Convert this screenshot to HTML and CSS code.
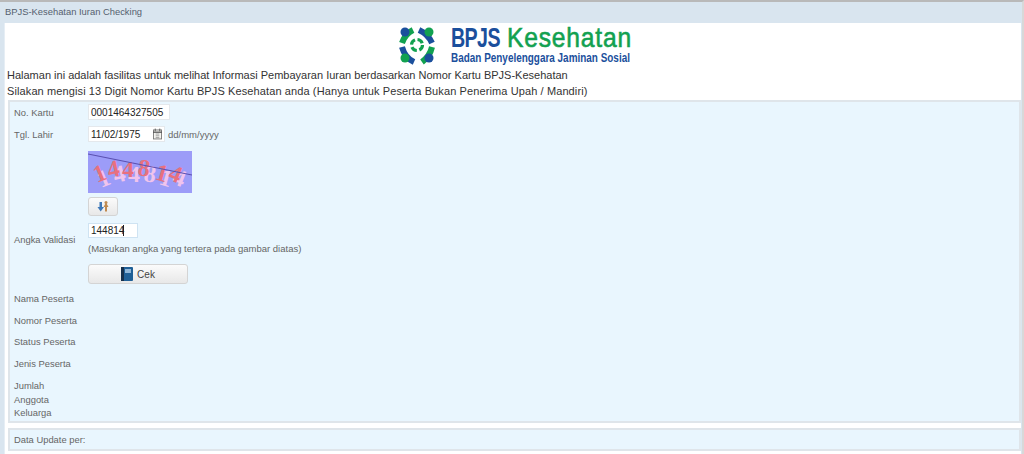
FILE: index.html
```html
<!DOCTYPE html>
<html lang="en">
<head>
    <meta charset="UTF-8">
    <title>BPJS-Kesehatan Iuran Checking</title>
    <link rel="stylesheet" href="styles.css">
</head>
<body>
    <div class="window">
        <div class="title-bar">BPJS-Kesehatan Iuran Checking</div>
        <div class="content">
            <div class="logo">
                <svg width="36" height="40" viewBox="0 0 36 40">
                    <g fill="none" stroke-width="6">
                        <path d="M20 5 Q29 9 33 18" stroke="#1b4f9c"/>
                        <path d="M33 22 Q31 31 23 37" stroke="#12a150"/>
                        <path d="M15 37 Q6 33 3 22" stroke="#1b4f9c"/>
                        <path d="M3 18 Q6 9 14 5" stroke="#12a150"/>
                    </g>
                    <circle cx="6" cy="7" r="4.500" fill="#1b4f9c"/>
                    <circle cx="30" cy="7" r="4.500" fill="#12a150"/>
                    <circle cx="6" cy="33" r="4.500" fill="#12a150"/>
                    <circle cx="30" cy="33" r="4.500" fill="#1b4f9c"/>
                    <path d="M18 9 L30 20 L18 32 L6 20 Z" fill="#fff"/>
                    <circle cx="18" cy="20" r="5.500" fill="none" stroke="#12a150" stroke-width="3.200" stroke-dasharray="6 2.600"/>
                </svg>
                <div class="logo-text">
                    <div class="logo-name"><span class="logo-bpjs">BPJS</span><span class="logo-kes">Kesehatan</span></div>
                    <div class="logo-sub"><span>Badan Penyelenggara Jaminan Sosial</span></div>
                </div>
            </div>
            <p class="intro">Halaman ini adalah fasilitas untuk melihat Informasi Pembayaran Iuran berdasarkan Nomor Kartu BPJS-Kesehatan</p>
            <p class="intro intro-wide">Silakan mengisi 13 Digit Nomor Kartu BPJS Kesehatan anda (Hanya untuk Peserta Bukan Penerima Upah / Mandiri)</p>

            <form class="panel form-grid">
                <label class="row-card">No. Kartu</label>
                <div class="row-card"><input type="text" class="input-card" value="0001464327505"></div>

                <label class="row-date">Tgl. Lahir</label>
                <div class="row-date date-line">
                    <span class="date-box">
                        <input type="text" value="11/02/1975">
                        <svg width="10" height="12" viewBox="0 0 10 12">
                            <rect x="0.5" y="1.5" width="9" height="10" fill="#f4f4f0" stroke="#777"/>
                            <path d="M0 4h10" stroke="#555" stroke-width="1.4"/>
                            <path d="M2.5 0v3M7.5 0v3" stroke="#555"/>
                            <path d="M3 6h4M3 8h4M3 10h4" stroke="#999"/>
                        </svg>
                    </span>
                    <span class="hint">dd/mm/yyyy</span>
                </div>

                <div class="captcha-cell">
                    <svg class="captcha" width="104" height="42" viewBox="0 0 104 42">
                        <rect width="104" height="42" fill="#9c9cf8"/>
                        <g class="captcha-back">
                            <text x="13" y="37" transform="rotate(-22 13 37)">1</text>
                            <text x="27" y="32" transform="rotate(-12 27 32)">4</text>
                            <text x="40" y="31">4</text>
                            <text x="55" y="30" transform="rotate(8 55 30)">8</text>
                            <text x="70" y="33" transform="rotate(16 70 33)">1</text>
                            <text x="83" y="32" transform="rotate(22 83 32)">4</text>
                        </g>
                        <g class="captcha-front">
                            <text x="9" y="32" transform="rotate(-22 9 32)">1</text>
                            <text x="21" y="27" transform="rotate(-12 21 27)">4</text>
                            <text x="34" y="26">4</text>
                            <text x="49" y="24" transform="rotate(8 49 24)">8</text>
                            <text x="66" y="28" transform="rotate(16 66 28)">1</text>
                            <text x="79" y="28" transform="rotate(22 79 28)">4</text>
                        </g>
                        <path d="M0 3 L104 24" stroke="#5a50b0" stroke-width="1.2"/>
                    </svg>
                    <button type="button" class="btn btn-refresh">
                        <svg width="12" height="11" viewBox="0 0 12 11">
                            <path d="M2.500 1h2.500v5h2L3.700 10.500 0.500 6h2z" fill="#3f78b8"/>
                            <path d="M8 10.500V6H6.500L9 1.500 11.500 6H10v4.500z" fill="#c08a50"/>
                            <circle cx="9" cy="1.500" r="1.500" fill="#c08a50"/>
                        </svg>
                    </button>
                </div>

                <label class="row-valid">Angka Validasi</label>
                <div class="row-valid">
                    <div class="valid-box">
                        <input type="text" class="input-valid" value="144814">
                        <span class="caret"></span>
                    </div>
                    <div class="hint hint-valid">(Masukan angka yang tertera pada gambar diatas)</div>
                </div>

                <div class="submit-cell">
                    <button type="button" class="btn btn-cek">
                        <svg width="12" height="14" viewBox="0 0 12 14">
                            <rect width="12" height="14" rx="1" fill="#1f5f96"/>
                            <rect x="0" y="0" width="3" height="14" fill="#16304c"/>
                            <rect x="4" y="2" width="6" height="4" fill="#8fb6d8"/>
                        </svg>
                        Cek
                    </button>
                </div>

                <label class="row-result row-first">Nama Peserta</label><div></div>
                <label class="row-result">Nomor Peserta</label><div></div>
                <label class="row-result">Status Peserta</label><div></div>
                <label class="row-result">Jenis Peserta</label><div></div>
                <label class="row-family">Jumlah Anggota Keluarga</label><div></div>
            </form>

            <div class="panel update-panel">Data Update per:</div>
        </div>
    </div>
</body>
</html>
```

FILE: styles.css
```css
* {
    box-sizing: border-box;
}

html, body {
    height: 100%;
}

body {
    margin: 0;
    overflow: hidden;
    background-color: #fff;
    font-family: "Liberation Sans", Arial, sans-serif;
    font-size: 9.4px;
    color: #666;
}

.window {
    height: 454px;
    width: 1024px;
    border-top: 2px solid #b9b9b9;
    border-right: 2px solid #d8d8d8;
    background-color: #d9e5ef;
    padding-right: 1px;
}

.title-bar {
    height: 21px;
    line-height: 20px;
    padding-left: 5px;
    color: #555f6e;
}

.content {
    height: 431px;
    margin-left: 4px;
    background-color: #fff;
    border-left: 1px solid #e6eef5;
}

.logo {
    display: flex;
    gap: 16px;
    height: 44px;
    padding-top: 2px;
    padding-left: 394px;
}

.logo-text {
    width: 182px;
    white-space: nowrap;
}

.logo-name {
    display: flex;
    height: 27px;
    line-height: 25px;
    font-size: 28px;
}

.logo-bpjs,
.logo-kes,
.logo-sub span {
    display: block;
    flex: none;
    transform-origin: left center;
}

.logo-bpjs {
    width: 56px;
    font-weight: bold;
    letter-spacing: -0.8px;
    color: #1b4f9c;
    transform: scaleX(0.7);
}

.logo-kes {
    width: 125px;
    letter-spacing: 0.9px;
    -webkit-text-stroke: 0.6px #12a150;
    color: #12a150;
    transform: scaleX(0.88);
}

.logo-sub {
    height: 13px;
    line-height: 13px;
    font-size: 12.5px;
    font-weight: bold;
    color: #1b4f9c;
}

.logo-sub span {
    width: 180px;
    transform: scaleX(0.795);
}

.intro {
    margin: 0;
    height: 16px;
    line-height: 16px;
    padding-left: 2px;
    font-size: 11px;
    color: #333;
}

.intro-wide {
    letter-spacing: 0.11px;
}

.panel {
    margin-left: 3px;
    margin-right: 0;
    background-color: #e9f6fe;
    border: 2px solid #dfe5ea;
}

.form-grid {
    display: grid;
    grid-template-columns: 74px 1fr;
    align-items: center;
    align-content: start;
    height: 323px;
    margin-top: 1px;
    padding-left: 4px;
}

input {
    display: block;
    height: 16px;
    padding: 0 2px;
    border: 1px solid #e4e8ec;
    background-color: #fff;
    font-family: "Liberation Sans", Arial, sans-serif;
    font-size: 10px;
    color: #222;
    outline: none;
}

.row-card {
    margin-top: 2px;
}

.input-card {
    width: 82px;
}

.row-date {
    margin-top: 6px;
}

.date-line {
    display: flex;
    align-items: center;
    gap: 3px;
}

.date-box {
    display: flex;
    align-items: center;
    width: 77px;
    height: 16px;
    padding-right: 2px;
    border: 1px solid #e4e8ec;
    background-color: #fff;
}

.date-box input {
    width: 64px;
    height: 14px;
    border: 0;
}

.hint {
    color: #666;
    font-size: 9.5px;
}

.captcha-cell {
    grid-column: 2;
    margin-top: 9px;
}

.captcha {
    display: block;
}

.captcha-back text,
.captcha-front text {
    font-family: "Liberation Serif", "Times New Roman", serif;
    font-size: 24px;
    font-weight: bold;
}

.captcha-back text {
    fill: #f0c4ec;
}

.captcha-front text {
    fill: #e8707e;
}

.btn {
    display: flex;
    align-items: center;
    justify-content: center;
    border: 1px solid #d4d4d4;
    border-radius: 3px;
    background: linear-gradient(#fbfbfb, #e8e8e8);
    font-family: "Liberation Sans", Arial, sans-serif;
    font-size: 10px;
    color: #444;
    padding: 0;
}

.btn-refresh {
    width: 30px;
    height: 19px;
    margin-top: 4px;
}

.row-valid {
    margin-top: 7px;
}

.valid-box {
    position: relative;
}

.input-valid {
    width: 50px;
    height: 15px;
    border-color: #cfe3f2;
}

.caret {
    position: absolute;
    left: 35px;
    top: 2px;
    width: 1px;
    height: 11px;
    background-color: #222;
}

.hint-valid {
    margin-top: 5px;
    line-height: 12px;
}

.submit-cell {
    grid-column: 2;
    margin-top: 9px;
}

.btn-cek {
    width: 100px;
    height: 20px;
    gap: 4px;
}

.row-result {
    align-self: start;
    height: 21.5px;
    line-height: 21.5px;
}

.row-first {
    margin-top: 4px;
}

.row-family {
    line-height: 13.5px;
    width: 50px;
    margin-top: 5px;
}

.update-panel {
    height: 23px;
    line-height: 19px;
    margin-top: 5px;
    padding-left: 4px;
}
```
